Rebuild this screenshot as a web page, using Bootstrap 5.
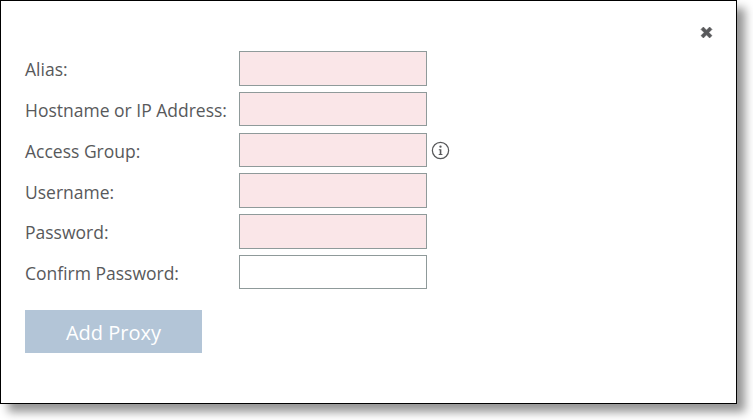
<!DOCTYPE html>
<html lang="en">
<head>
<meta charset="utf-8">
<title>Add Proxy</title>
<link href="https://cdn.jsdelivr.net/npm/bootstrap@5.3.0/dist/css/bootstrap.min.css" rel="stylesheet">
<style>
html,body{margin:0;background:#fff;height:420px;overflow:hidden}
body{font-family:"Open Sans",sans-serif;color:#58595b}
.proxy-panel{position:relative;width:737px;height:404px;background:#fff;border:1px solid #000;border-width:1.5px;box-shadow:8px 8px 9px rgba(0,0,0,.42);padding:50px 24px 0}
.proxy-close{position:absolute;top:24px;right:22px;padding:0;border:0;background:none;line-height:0}
.proxy-form{display:flex;flex-direction:column;gap:6.3px}
.proxy-row{display:flex;align-items:center;height:34.5px}
.proxy-label{width:214px;margin:0;padding-top:2px;font-size:17.5px;white-space:nowrap;color:#58595b}
.proxy-input{width:188px;height:34.5px;border:1px solid #8f9a9a;border-radius:0;padding:4px 8px;box-shadow:none}
.proxy-input.is-req{background:#fae6e8}
.proxy-info{margin-left:4px;margin-top:2px;line-height:0}
.proxy-btn{margin-top:14px;width:177px;height:43px;border:0;border-radius:0;background:#b3c5d7;color:#fff;font-size:20px;padding:3px 0 0}
.proxy-btn:hover{background:#b3c5d7;color:#fff}
</style>
</head>
<body>
<div class="proxy-panel">
<button class="proxy-close" type="button" aria-label="Close">
<svg width="15" height="15" viewBox="0 0 13 13"><path d="M1.8 3.8 3.8 1.8 6.5 4.5 9.2 1.8 11.2 3.8 8.5 6.5 11.2 9.2 9.2 11.2 6.5 8.5 3.8 11.2 1.8 9.2 4.5 6.5Z" fill="#58595b" stroke="#58595b" stroke-width=".6"/></svg>
</button>
<form class="proxy-form">
<div class="proxy-row"><label class="proxy-label">Alias:</label><input class="form-control proxy-input is-req" type="text"></div>
<div class="proxy-row"><label class="proxy-label">Hostname or IP Address:</label><input class="form-control proxy-input is-req" type="text"></div>
<div class="proxy-row"><label class="proxy-label">Access Group:</label><input class="form-control proxy-input is-req" type="text">
<span class="proxy-info"><svg width="19" height="19" viewBox="0 0 18 18"><circle cx="9" cy="9" r="7.7" fill="none" stroke="#58595b" stroke-width="1.2"/><circle cx="9" cy="5.4" r="1.1" fill="#58595b"/><path d="M7.4 7.7H9.8V12.2H10.8V13.3H7.3V12.2H8.3V8.8H7.4Z" fill="#58595b"/></svg></span></div>
<div class="proxy-row"><label class="proxy-label">Username:</label><input class="form-control proxy-input is-req" type="text"></div>
<div class="proxy-row"><label class="proxy-label">Password:</label><input class="form-control proxy-input is-req" type="password"></div>
<div class="proxy-row"><label class="proxy-label">Confirm Password:</label><input class="form-control proxy-input" type="password"></div>
<div><button class="btn proxy-btn" type="button">Add Proxy</button></div>
</form>
</div>
<script src="https://cdn.jsdelivr.net/npm/bootstrap@5.3.0/dist/js/bootstrap.bundle.min.js"></script>
</body>
</html>
